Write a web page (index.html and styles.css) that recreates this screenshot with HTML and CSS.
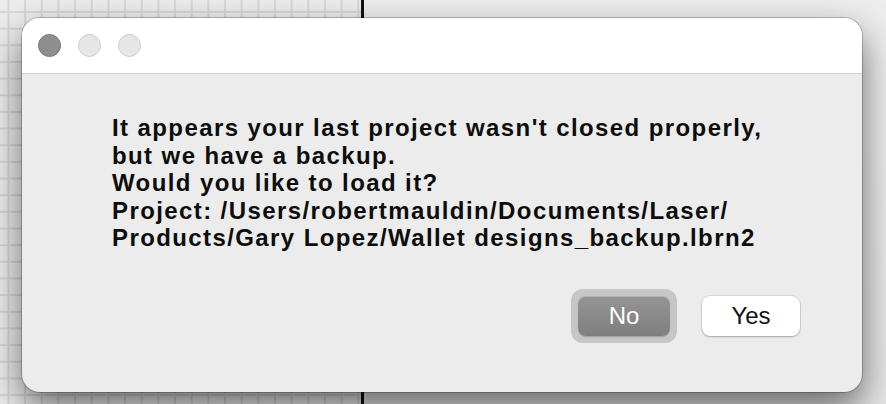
FILE: index.html
```html
<!DOCTYPE html>
<html>
<head>
<meta charset="utf-8">
<link rel="stylesheet" href="styles.css">
</head>
<body>
<div class="desk">
  <div class="grid"></div>
  <div class="divider"></div>
  <div class="panel"></div>
  <div class="dialog">
    <div class="titlebar">
      <span class="light close"></span>
      <span class="light"></span>
      <span class="light"></span>
    </div>
    <div class="body">
      <p class="msg">It appears your last project wasn't closed properly,<br>but we have a backup.<br>Would you like to load it?<br>Project: /Users/robertmauldin/Documents/Laser/<br>Products/Gary Lopez/Wallet designs_backup.lbrn2</p>
      <div class="actions">
        <div class="ring"><button class="btn no">No</button></div>
        <button class="btn yes">Yes</button>
      </div>
    </div>
  </div>
</div>
</body>
</html>
```
FILE: styles.css
```css
html, body {
  margin: 0;
  padding: 0;
  width: 886px;
  height: 404px;
  overflow: hidden;
}
.desk {
  position: relative;
  width: 886px;
  height: 404px;
  display: flex;
  background: #ececec;
}
.grid {
  width: 361px;
  height: 404px;
  background-color: #ececec;
  background-image:
    linear-gradient(to right, #d6d6d6 2px, transparent 2px),
    linear-gradient(to bottom, #d6d6d6 2px, transparent 2px);
  background-size: 16.67px 16.67px;
  background-position: 7.5px 11px;
}
.divider {
  width: 3px;
  height: 404px;
  background: #111;
}
.panel {
  flex: 1;
  background: linear-gradient(to bottom, #ededed, #e6e6e6);
}
.dialog {
  position: absolute;
  left: 22px;
  top: 18px;
  width: 840px;
  height: 374px;
  border-radius: 18px;
  background: #ececec;
  box-shadow: 0 0 0 1px rgba(0,0,0,0.22), 0 16px 36px rgba(0,0,0,0.55);
  overflow: hidden;
  display: flex;
  flex-direction: column;
  font-family: "Liberation Sans", Arial, sans-serif;
}
.titlebar {
  height: 55px;
  background: #ffffff;
  border-bottom: 1px solid #d2d2d2;
  display: flex;
  align-items: center;
  gap: 17px;
  padding-left: 16px;
}
.light {
  width: 21px;
  height: 21px;
  border-radius: 50%;
  background: #e6e6e6;
  border: 1px solid #cdcdcd;
}
.light.close {
  background: #8e8e8e;
  border-color: #767676;
}
.body {
  flex: 1;
  display: flex;
  flex-direction: column;
  padding: 40px 62px 0 90px;
}
.msg {
  margin: 0;
  font-size: 24px;
  font-weight: bold;
  letter-spacing: 1.4px;
  line-height: 27.6px;
  color: #0d0d0d;
}
.actions {
  margin-top: 37px;
  display: flex;
  justify-content: flex-end;
  align-items: center;
  gap: 25px;
}
.ring {
  padding: 7px;
  border-radius: 12px;
  background: #c6c6c6;
  display: flex;
}
.btn {
  height: 40px;
  border-radius: 8px;
  font-family: "Liberation Sans", Arial, sans-serif;
  font-size: 24px;
  border: none;
  padding: 0;
}
.no {
  width: 92px;
  color: #fff;
  background: linear-gradient(to bottom, #959595, #7e7e7e);
  box-shadow: inset 0 1px 0 rgba(255,255,255,0.25), 0 1px 1px rgba(0,0,0,0.2);
}
.yes {
  width: 98px;
  color: #111;
  background: #fff;
  box-shadow: 0 0 0 0.5px rgba(0,0,0,0.15), 0 1px 2px rgba(0,0,0,0.25);
}
```
